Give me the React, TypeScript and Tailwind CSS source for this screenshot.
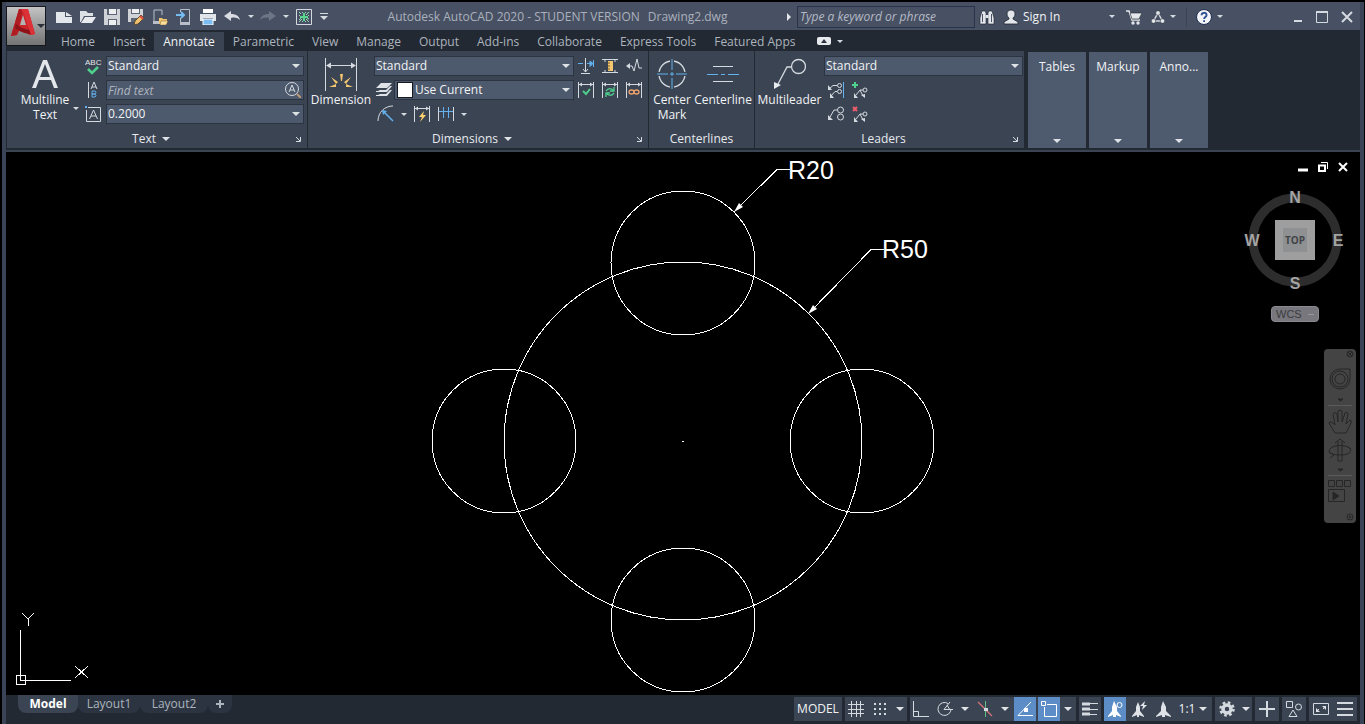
import type { ReactNode } from "react";

type IconProps = { w?: number; h?: number; children: ReactNode };

function Icon({ w = 16, h = 16, children }: IconProps) {
  return (
    <svg
      width={w}
      height={h}
      viewBox={`0 0 ${w} ${h}`}
      fill="none"
      stroke="#d5dae0"
      className="shrink-0"
      aria-hidden="true"
    >
      {children}
    </svg>
  );
}

function Caret({ small = false }: { small?: boolean }) {
  return small ? (
    <svg width="6" height="3" viewBox="0 0 6 3" className="shrink-0" aria-hidden="true">
      <path d="M0 0h6L3 3z" fill="#d5dae0" />
    </svg>
  ) : (
    <svg width="8" height="4" viewBox="0 0 8 4" className="shrink-0" aria-hidden="true">
      <path d="M0 0h8L4 4z" fill="#dfe3e8" />
    </svg>
  );
}

type IconButtonProps = { label: string; className?: string; children: ReactNode };

function IconButton({ label, className = "w-6", children }: IconButtonProps) {
  return (
    <button
      type="button"
      aria-label={label}
      className={`flex h-full shrink-0 items-center justify-center ${className}`}
    >
      {children}
    </button>
  );
}

/* ---------- Title bar ---------- */

function AppLogo() {
  return (
    <button
      type="button"
      aria-label="Application menu"
      className="absolute left-0 top-1 z-10 flex h-10 w-10 items-center justify-center border border-[#15181d] bg-linear-to-b from-[#c4c4c4] to-[#747474]"
    >
      <svg width="38" height="38" viewBox="0 0 38 38" aria-hidden="true">
        <path d="M12 2h9l7 25-6 1-2-6h-7l-3 6-6 1z" fill="#c9252b" />
        <path d="M16 8l3 10h-6z" fill="#b4b4b4" />
        <path d="M12 2h4L10 28l-6 1z" fill="#b01c22" />
        <path d="M9 17q8 7 16 5l2 5q-10 1-19-6z" fill="#8e1318" />
        <path d="M14 2h7l7 25-4 1-7-21z" fill="#dc3237" />
        <path d="M30 17h8l-4 4z" fill="#2a2f38" />
      </svg>
    </button>
  );
}

function QuickAccess() {
  return (
    <div className="flex h-full pl-[46px]">
      <IconButton label="New">
        <Icon>
          <path d="M0 3h9v5h7v6H0z" fill="#e3e6ea" stroke="none" />
          <path d="M10 3l6 4h-6z" fill="#e3e6ea" stroke="none" />
        </Icon>
      </IconButton>
      <IconButton label="Open">
        <Icon>
          <path d="M0 2h6l2 2h5v3H4L1 13H0z" fill="#dcdfe4" stroke="none" />
          <path d="M5 8h11l-4 6H1z" fill="#e8eaed" stroke="none" />
        </Icon>
      </IconButton>
      <IconButton label="Save">
        <Icon>
          <path d="M0 0h16v16H0z" fill="#cfd3d8" stroke="none" />
          <path d="M3 0h10v6H3zM4 10h9v6H4z" fill="#5d6573" stroke="none" />
          <path d="M5 0h7v5H5zM5 11h7v5H5z" fill="#eceef0" stroke="none" />
        </Icon>
      </IconButton>
      <IconButton label="Save As">
        <Icon>
          <path d="M0 0h15v8l-7 5H0z" fill="#cfd3d8" stroke="none" />
          <path d="M3 0h9v5H3zM3 9h6v4H3z" fill="#5d6573" stroke="none" />
          <path d="M4 0h7v4H4z" fill="#eceef0" stroke="none" />
          <path d="M6 16l1-4 6-6 3 3-6 6z" fill="#ecc06c" stroke="#5b4a33" />
          <path d="M12 7l3 3" stroke="#e04b43" strokeWidth="2" />
        </Icon>
      </IconButton>
      <IconButton label="Open from Web and Mobile">
        <Icon>
          <path d="M2 12V1h8v5" stroke="#b9bfc8" />
          <path d="M1 12h6v3H1z" fill="#b9bfc8" stroke="none" />
          <path d="M7 9h3l1 1h4v5H7z" fill="#f0c36d" stroke="none" />
          <path d="M9 12h7l-2 4H8z" fill="#ffdf9a" stroke="#77603a" strokeWidth=".5" />
        </Icon>
      </IconButton>
      <IconButton label="Save to Web and Mobile">
        <Icon>
          <path d="M4.500 3V.5h9V13M4.500 9v4" stroke="#b9bfc8" />
          <path d="M4 13h10v3H4z" fill="#b9bfc8" stroke="none" />
          <path d="M0 6h8M5 3l3 3-3 3" stroke="#74bdf3" strokeWidth="2" />
        </Icon>
      </IconButton>
      <IconButton label="Plot">
        <Icon>
          <path d="M3 0h10v4H3z" fill="#fff" stroke="none" />
          <path d="M0 5h16v7h-3V9H3v3H0z" fill="#e1e4e8" stroke="none" />
          <path d="M3 10h10v6H3z" fill="#7cbcf0" stroke="#fff" />
        </Icon>
      </IconButton>
      <IconButton label="Undo">
        <Icon>
          <path d="M0 7l7-5v3c5 0 8 2 9 6-2-2-5-3-9-2v3z" fill="#d9dde3" stroke="none" />
        </Icon>
      </IconButton>
      <IconButton label="Undo history" className="w-3.5">
        <Caret small />
      </IconButton>
      <IconButton label="Redo" className="w-5">
        <Icon>
          <path d="M16 7L9 2v3c-5 0-8 2-9 6 2-2 5-3 9-2v3z" fill="#6d7585" stroke="none" />
        </Icon>
      </IconButton>
      <IconButton label="Redo history" className="w-4">
        <Caret small />
      </IconButton>
      <IconButton label="Annotation monitor" className="w-5">
        <Icon>
          <path d="M.5.500h15v15H.5z" />
          <path
            d="M3 3l2 2M3 6l2 2M3 11l2-2M3 13l3-3M13 3l-3 3M13 6l-2 2M13 10l-2-1M13 13l-3-3M6 3l1 1M10 3L9 4M6 13l1-1M10 13l-1-1"
            stroke="#9ad9b8"
          />
          <path d="M8 4v8M4 8h8" stroke="#58d68d" strokeWidth="2" />
        </Icon>
      </IconButton>
      <IconButton label="Customize Quick Access Toolbar" className="w-5">
        <Icon w={8} h={7}>
          <path d="M0 .5h8" />
          <path d="M0 3h8L4 7z" fill="#d5dae0" stroke="none" />
        </Icon>
      </IconButton>
    </div>
  );
}

function TitleBar() {
  return (
    <div className="flex h-7 items-center bg-[#485063] pt-px">
      <QuickAccess />
      <h1 className="flex min-w-0 flex-1 justify-center gap-2 whitespace-nowrap text-[12px] text-[#aab1bd]">
        <span>Autodesk AutoCAD 2020 - STUDENT VERSION</span>
        <span>Drawing2.dwg</span>
      </h1>
      <span className="flex w-4 justify-center">
        <Icon w={4} h={8}>
          <path d="M0 0l4 4-4 4z" fill="#e3e6ea" stroke="none" />
        </Icon>
      </span>
      <input
        type="text"
        aria-label="Search"
        placeholder="Type a keyword or phrase"
        className="block h-[22px] w-[178px] border border-[#28324a] bg-[#485063] px-0.5 text-[12px] italic text-[#dfe3e8] placeholder:text-[#b4bac5]"
      />
      <IconButton label="Find">
        <Icon>
          <path
            d="M3 2h3l1 2v11H1V9zM13 2h-3L9 4v11h6V9z"
            fill="#e3e6ea"
            stroke="#1f2631"
            strokeWidth=".6"
          />
          <path d="M6.500 6h3v3h-3z" fill="#e3e6ea" stroke="none" />
          <path d="M3.500 5v8M12.500 5v8" stroke="#4a5365" />
        </Icon>
      </IconButton>
      <button type="button" className="flex h-full w-[118px] items-center text-[12px] text-[#f1f3f5]">
        <span className="flex w-6 justify-center">
          <Icon>
            <path
              d="M8 1c3 0 4 2 4 4s-1 3-2 4v1l5 3v2H1v-2l5-3V9C5 8 4 7 4 5s1-4 4-4z"
              fill="#e3e6ea"
              stroke="#1f2631"
              strokeWidth=".8"
            />
          </Icon>
        </span>
        <span>Sign In</span>
        <span className="ml-auto pr-0.5">
          <Caret small />
        </span>
      </button>
      <IconButton label="App Store" className="w-[34px]">
        <Icon>
          <path d="M0 2h3l3 9h8" strokeWidth="1.500" stroke="#e3e6ea" />
          <path d="M4 4h12l-3 6H6z" fill="#e3e6ea" stroke="#1f2631" strokeWidth=".6" />
          <circle cx="7" cy="14" r="1.700" fill="#e3e6ea" stroke="none" />
          <circle cx="12" cy="14" r="1.700" fill="#e3e6ea" stroke="none" />
        </Icon>
      </IconButton>
      <IconButton label="Autodesk 360" className="w-3.5">
        <Icon w={14} h={14}>
          <path d="M7 3l4.500 8h-9z" strokeWidth="1.500" />
          <circle cx="7" cy="3" r="2.300" fill="#e3e6ea" stroke="#1f2631" strokeWidth=".5" />
          <circle cx="2.500" cy="11" r="2.300" fill="#e3e6ea" stroke="#1f2631" strokeWidth=".5" />
          <circle cx="11.500" cy="11" r="2.300" fill="#e3e6ea" stroke="#1f2631" strokeWidth=".5" />
        </Icon>
      </IconButton>
      <IconButton label="Autodesk 360 options" className="w-4">
        <Caret small />
      </IconButton>
      <span className="mx-[5px] h-5 w-px bg-[#3c4454]" />
      <IconButton label="Help">
        <Icon>
          <circle cx="8" cy="8" r="7.500" fill="#f2f4f7" stroke="#1f2f50" />
          <path
            d="M5.500 6.200C5.500 3 10.600 3 10.600 6c0 2-2.500 2-2.500 4M8.100 11.200v1.800"
            stroke="#2c4f91"
            strokeWidth="1.800"
          />
        </Icon>
      </IconButton>
      <IconButton label="Help options" className="w-2">
        <Caret small />
      </IconButton>
      <div className="flex h-full items-center pl-[62px]">
        <IconButton label="Minimize">
          <Icon w={8} h={12}>
            <path d="M0 10h8" strokeWidth="2" />
          </Icon>
        </IconButton>
        <IconButton label="Maximize">
          <Icon w={12} h={12}>
            <path d="M.5 1h11v10.500H.5z" />
            <path d="M0 1h12" strokeWidth="2" />
          </Icon>
        </IconButton>
        <IconButton label="Close" className="w-[26px]">
          <Icon w={12} h={12}>
            <path d="M1 1l10 10M11 1L1 11" strokeWidth="2" />
          </Icon>
        </IconButton>
      </div>
    </div>
  );
}

/* ---------- Ribbon ---------- */

const ribbonTabs = [
  "Home",
  "Insert",
  "Annotate",
  "Parametric",
  "View",
  "Manage",
  "Output",
  "Add-ins",
  "Collaborate",
  "Express Tools",
  "Featured Apps",
];

function RibbonTabs() {
  return (
    <nav aria-label="Ribbon" className="flex h-[21px] items-end bg-[#222933] pl-[46px]">
      {ribbonTabs.map((tab) => (
        <button
          key={tab}
          type="button"
          className={`h-[19px] whitespace-nowrap px-[9px] text-[12px] leading-[18px] ${
            tab === "Annotate" ? "bg-[#3b4453] text-[#f1f3f5]" : "text-[#adb4be]"
          }`}
        >
          {tab}
        </button>
      ))}
      <button type="button" aria-label="Minimize ribbon" className="ml-3 flex h-5 items-center gap-1.5">
        <Icon w={14} h={8}>
          <rect width="14" height="8" rx="2" fill="#e8ebee" stroke="none" />
          <path d="M4 6l3-4 3 4z" fill="#2b3340" stroke="none" />
        </Icon>
        <Caret small />
      </button>
    </nav>
  );
}

type ComboProps = { label: string; value: string; swatch?: boolean; className?: string };

function Combo({ label, value, swatch = false, className = "w-full" }: ComboProps) {
  return (
    <div className={`relative h-5 border border-[#2c3442] bg-[#4d596c] ${className}`}>
      <select
        aria-label={label}
        defaultValue={value}
        className={`block h-full w-full appearance-none pr-4 text-[12px] leading-[18px] text-[#f1f3f5] ${
          swatch ? "pl-5" : "pl-px"
        }`}
      >
        <option>{value}</option>
      </select>
      {swatch && <span className="absolute left-0.5 top-px size-4 border border-[#15181d] bg-white" />}
      <span className="pointer-events-none absolute inset-y-0 right-[3px] flex items-center">
        <Caret />
      </span>
    </div>
  );
}

type PanelProps = { title: string; caret?: boolean; launcher?: boolean; className: string; children: ReactNode };

function Panel({ title, caret = false, launcher = false, className, children }: PanelProps) {
  return (
    <section aria-label={title} className={`flex shrink-0 flex-col border-r border-[#222933] bg-[#3b4453] ${className}`}>
      <div className="flex flex-1 items-start pt-[5px]">{children}</div>
      <div
        className={`relative flex h-[18px] items-center justify-center gap-1.5 text-[12px] text-[#e6e9ed] ${
          launcher ? "pr-3" : ""
        }`}
      >
        <span>{title}</span>
        {caret && <Caret />}
        {launcher && (
          <button type="button" aria-label={`${title} settings`} className="absolute right-1.5 top-[7px]">
            <Icon w={5} h={5}>
              <path d="M0 0l4 4M4.500 0v4.500H0" />
            </Icon>
          </button>
        )}
      </div>
    </section>
  );
}

function BigButton({ label, className, children }: IconButtonProps) {
  return (
    <button
      type="button"
      className={`flex shrink-0 flex-col items-center text-[12px] leading-[15px] text-[#f1f3f5] ${className}`}
    >
      <span className="flex h-9 w-full items-center justify-center">{children}</span>
      <span className="text-center">{label}</span>
    </button>
  );
}

function TextPanel() {
  return (
    <Panel title="Text" caret launcher className="w-[301px]">
      <div className="relative w-[76px]">
        <BigButton label="Multiline Text" className="mx-auto w-16">
          <Icon w={26} h={28}>
            <path d="M0 28L11 0h4l11 28h-4l-3-8H7l-3 8zM8 17h10L13 4z" fill="#e3e6ea" stroke="none" />
          </Icon>
        </BigButton>
        <span className="absolute right-1 top-[51px] flex">
          <Caret small />
        </span>
      </div>
      <div className="grid w-[23px] auto-rows-[20px] gap-y-1">
        <IconButton label="Check spelling" className="w-5">
          <Icon w={18} h={18}>
            <text x="1" y="8" fontSize="8" fontFamily="Liberation Sans" stroke="none" fill="#e3e6ea">
              ABC
            </text>
            <path d="M4 12l4 4 6-6" stroke="#4fd08c" strokeWidth="2.500" />
          </Icon>
        </IconButton>
        <IconButton label="Text alignment" className="w-5">
          <Icon>
            <path d="M3.500 0v16" />
            <path d="M6 7l3-7 3 7M7 5h4" />
            <path d="M7 9v6h3q2-1 0-3H7h3q2-2 0-3z" stroke="#63b1ee" />
          </Icon>
        </IconButton>
        <IconButton label="Annotative text" className="w-5">
          <Icon>
            <path d="M3 1.500h12.500v14H1.500V4" />
            <path d="M4.500 13l4-9 4 9M6 10h5" />
            <path d="M0 1h2" stroke="#63b1ee" strokeWidth="2" />
          </Icon>
        </IconButton>
      </div>
      <div className="flex w-[198px] flex-col gap-1">
        <Combo label="Text style" value="Standard" />
        <div className="relative h-5 border border-[#2c3442] bg-[#4d596c]">
          <input
            type="text"
            aria-label="Find text"
            placeholder="Find text"
            className="block h-full w-full px-px text-[12px] italic text-[#f1f3f5] placeholder:text-[#aeb5c0]"
          />
          <button type="button" aria-label="Find" className="absolute right-0.5 top-px">
            <Icon>
              <circle cx="7" cy="7" r="6.500" />
              <path d="M4 10l3-7 3 7M5 8h4" />
              <path d="M12 12l4 4" stroke="#b99a77" strokeWidth="2" />
            </Icon>
          </button>
        </div>
        <Combo label="Text height" value="0.2000" />
      </div>
    </Panel>
  );
}

function DimensionsPanel() {
  return (
    <Panel title="Dimensions" caret launcher className="w-[341px]">
      <BigButton label="Dimension" className="w-[66px]">
        <Icon w={32} h={33}>
          <path d="M.5 0v33M31.500 0v33M2 7.500h28" />
          <path d="M1 7.500l5-3v6zM31 7.500l-5-3v6z" fill="#d5dae0" stroke="none" />
          <path
            d="M15 16h3l-1 7h-1zM6 19l7 5-2 2zM26 19l-7 5 2 2zM4 29l7-3v3zM28 29l-7-3v3z"
            fill="#f3c66f"
            stroke="none"
          />
        </Icon>
      </BigButton>
      <div className="flex w-[200px] flex-col gap-1">
        <Combo label="Dimension style" value="Standard" />
        <div className="flex">
          <span className="flex w-5 items-center justify-center">
            <Icon>
              <path
                d="M5 1h11l-5 5H0zM0 9h2l2-1h6l4-4h2l-5 6H0zM0 13h2l2-1h6l4-4h2l-5 6H0z"
                fill="#dfe3e8"
                stroke="none"
              />
            </Icon>
          </span>
          <Combo label="Dimension layer" value="Use Current" swatch className="flex-1" />
        </div>
        <div className="flex h-5">
          <IconButton label="Radius">
            <Icon w={18} h={18}>
              <path d="M1 16C1 7 8 1 16 1" />
              <path d="M6 6l10 10" stroke="#63b1ee" strokeWidth="1.500" />
              <path d="M5 5l5 1-4 4z" fill="#63b1ee" stroke="none" />
            </Icon>
          </IconButton>
          <IconButton label="Dimension types" className="w-3">
            <Caret small />
          </IconButton>
          <IconButton label="Quick dimension">
            <Icon>
              <path d="M.5 0v16M15.500 0v16M1 2.500h14" />
              <path d="M1 2.500l3-2v4zM15 2.500l-3-2v4z" fill="#d5dae0" stroke="none" />
              <path d="M10 5l-5 6h3l-2 5 6-7H9z" fill="#ffd36c" stroke="none" />
            </Icon>
          </IconButton>
          <IconButton label="Continue">
            <Icon>
              <path d="M.5 1v14M15.500 1v14" />
              <path d="M5.500 1v11M10.500 1v11M1 5.500h14" stroke="#63b1ee" />
            </Icon>
          </IconButton>
          <IconButton label="Continue options" className="w-3">
            <Caret small />
          </IconButton>
        </div>
      </div>
      <div className="grid auto-rows-[20px] grid-cols-3 gap-y-1">
        <IconButton label="Break">
          <Icon>
            <path d="M7.500 0v14M5 11l2.500 3 2.500-3M3 15.500h9" />
            <path d="M0 5.500h5M9 5.500h4" stroke="#63b1ee" />
            <path d="M12 3l3 2.500-3 3zM15.500 2v7" fill="#63b1ee" stroke="#63b1ee" />
          </Icon>
        </IconButton>
        <IconButton label="Adjust space">
          <Icon>
            <path d="M0 1.500h16M0 14.500h16M3 2v2M13 2v2M3 12v2M13 12v2" />
            <path d="M6 3h5v10H6z" fill="#f3c66f" stroke="none" />
            <path d="M6 5h2M6 8h2M6 11h2" stroke="#795b27" />
          </Icon>
        </IconButton>
        <IconButton label="Dimension jog line">
          <Icon>
            <path d="M2 8h4l2 5 3-12 2 9h3" />
            <path d="M0 8l4-3v6z" fill="#d5dae0" stroke="none" />
          </Icon>
        </IconButton>
        <IconButton label="Inspect">
          <Icon>
            <path d="M.5 0v16M15.500 0v16M1 2.500h14" />
            <path d="M1 2.500l3-2v4zM15 2.500l-3-2v4z" fill="#d5dae0" stroke="none" />
            <path d="M5 9l3 3 4-5" stroke="#4fd08c" strokeWidth="2" />
          </Icon>
        </IconButton>
        <IconButton label="Update">
          <Icon>
            <path d="M.5 0v16M15.500 0v16M1 2.500h14" />
            <path d="M1 2.500l3-2v4zM15 2.500l-3-2v4z" fill="#d5dae0" stroke="none" />
            <path
              d="M4 9q3-4 7-1M12 5v4H8M12 11q-3 4-7 1M4 15v-4h4"
              stroke="#4fd08c"
              strokeWidth="1.300"
            />
          </Icon>
        </IconButton>
        <IconButton label="Reassociate">
          <Icon>
            <path d="M.5 0v16M15.500 0v16M1 2.500h14" />
            <path d="M1 2.500l3-2v4zM15 2.500l-3-2v4z" fill="#d5dae0" stroke="none" />
            <ellipse cx="5.500" cy="10" rx="2.500" ry="2" stroke="#f0a26b" strokeWidth="1.300" />
            <ellipse cx="10.500" cy="10" rx="2.500" ry="2" stroke="#f0a26b" strokeWidth="1.300" />
          </Icon>
        </IconButton>
      </div>
    </Panel>
  );
}

function CenterlinesPanel() {
  return (
    <Panel title="Centerlines" className="w-[106px]">
      <BigButton label="Center Mark" className="w-[46px]">
        <Icon w={32} h={32}>
          <circle cx="16" cy="16" r="13" strokeWidth="1.300" />
          <path d="M16 0v11M16 21v11M0 16h11M21 16h11" stroke="#3b4453" strokeWidth="4" />
          <path d="M16 1v11M16 20v11M1 16h11M20 16h11M16 14v4M14 16h4" stroke="#63b1ee" />
        </Icon>
      </BigButton>
      <BigButton label="Centerline" className="w-14">
        <Icon w={32} h={16}>
          <path d="M6 .5h20M6 15.500h20" />
          <path d="M0 8.500h11M14 8.500h4M21 8.500h11" stroke="#63b1ee" />
        </Icon>
      </BigButton>
    </Panel>
  );
}

function LeadersPanel() {
  return (
    <Panel title="Leaders" launcher className="w-[270px]">
      <BigButton label="Multileader" className="w-[69px]">
        <Icon w={32} h={32}>
          <circle cx="24.500" cy="8.500" r="7" strokeWidth="1.300" />
          <path d="M17 9h-4L4 26" strokeWidth="1.300" />
          <path d="M0 31V24l7 3z" fill="#e8ebee" stroke="none" />
        </Icon>
      </BigButton>
      <div className="flex w-[199px] flex-col gap-1">
        <Combo label="Multileader style" value="Standard" />
        <div className="grid w-12 auto-rows-[20px] grid-cols-2 gap-y-1">
          <IconButton label="Align leaders">
            <Icon>
              <circle cx="11.500" cy="3.500" r="2" />
              <circle cx="11.500" cy="9.500" r="2" />
              <path d="M9 3.500H5L1 7M9 9.500H7L3 14" />
              <path d="M0 3v5h4zM2 11v5h4z" fill="#d5dae0" stroke="none" />
              <path d="M15.500 0v16" stroke="#63b1ee" />
            </Icon>
          </IconButton>
          <IconButton label="Add leader">
            <Icon>
              <circle cx="13" cy="8" r="2" />
              <path d="M11 8H8L4 13M8 8l3 6" />
              <path d="M2 11v5h4zM9 13l4 3v-4z" fill="#d5dae0" stroke="none" />
              <path d="M3 0v6M0 3h6" stroke="#4fd08c" strokeWidth="2" />
            </Icon>
          </IconButton>
          <IconButton label="Collect leaders">
            <Icon>
              <circle cx="12.500" cy="4" r="3" />
              <circle cx="12.500" cy="11" r="3" />
              <path d="M9 4H6L2 11" />
              <path d="M0 9v5h5z" fill="#d5dae0" stroke="none" />
            </Icon>
          </IconButton>
          <IconButton label="Remove leader">
            <Icon>
              <circle cx="13" cy="8" r="2" />
              <path d="M11 8H8L4 13M8 8l3 6" />
              <path d="M2 11v5h4zM9 13l4 3v-4z" fill="#d5dae0" stroke="none" />
              <path d="M1 1l4 4M5 1L1 5" stroke="#ee5d6c" strokeWidth="2" />
            </Icon>
          </IconButton>
        </div>
      </div>
    </Panel>
  );
}

function Ribbon() {
  return (
    <div className="flex h-[101px] gap-[3px] border-b-2 border-[#3b4453] bg-[#222933] pb-0.5 pl-px">
      <div className="flex">
        <TextPanel />
        <DimensionsPanel />
        <CenterlinesPanel />
        <LeadersPanel />
      </div>
      {["Tables", "Markup", "Anno..."].map((name) => (
        <button
          key={name}
          type="button"
          className="mt-px flex h-24 w-[58px] flex-col items-center justify-between bg-[#4e5a6d] pb-[5px] pt-1.5 text-[12px] leading-[18px] text-[#f1f3f5]"
        >
          {name}
          <Caret />
        </button>
      ))}
    </div>
  );
}

/* ---------- Drawing area ---------- */

const circles = [
  { cx: 677, cy: 289, r: 179 },
  { cx: 677, cy: 111, r: 72 },
  { cx: 498, cy: 289, r: 72 },
  { cx: 856, cy: 289, r: 72 },
  { cx: 677, cy: 468, r: 72 },
];

function Drawing() {
  return (
    <svg
      viewBox="0 0 1354 543"
      className="absolute inset-0 h-full w-full"
      fill="none"
      stroke="#fff"
      role="img"
      aria-label="Drawing2.dwg"
    >
      <g shapeRendering="crispEdges">
        {circles.map((c) => (
          <circle key={`${c.cx}-${c.cy}-${c.r}`} {...c} />
        ))}
        <path d="M676 289.500h2" />
        <path d="M728 60L771 17.500H784M802 162L865 97.500H878" />
      </g>
      <path d="M728 60l5-9 4 4zM802 162l5-9 4 4z" fill="#fff" stroke="none" />
      <g fill="#fff" stroke="none" fontSize="25" fontFamily="Liberation Sans, Arial, sans-serif">
        <text x="782" y="27">
          R20
        </text>
        <text x="876" y="106">
          R50
        </text>
      </g>
    </svg>
  );
}

function UcsIcon() {
  return (
    <svg
      width="76"
      height="90"
      viewBox="0 0 76 90"
      className="absolute bottom-0 left-2"
      fill="none"
      stroke="#fff"
      role="img"
      aria-label="UCS icon"
    >
      <g shapeRendering="crispEdges">
        <path d="M6.500 25v51M6 75.500h51M2.500 70.500h9v9h-9z" />
        <path d="M8 8l6 6 6-6M14.500 14v7" />
        <path d="M61 61l13 12M74 61L61 73" />
      </g>
    </svg>
  );
}

function ViewCube() {
  return (
    <div className="flex flex-col items-center gap-3.5">
      <svg width="104" height="104" viewBox="0 0 104 104" role="img" aria-label="ViewCube">
        <circle cx="52" cy="52" r="42" fill="none" stroke="#2d2d2d" strokeWidth="9" />
        <path d="M32 32h40v40H32z" fill="#9e9e9e" />
        <path d="M40 40h24v24H40z" fill="#8e9092" />
        <g
          fill="#a3a3a3"
          fontSize="16"
          fontWeight="bold"
          fontFamily="Liberation Sans, Arial, sans-serif"
          textAnchor="middle"
        >
          <text x="52" y="15">
            N
          </text>
          <text x="52" y="101">
            S
          </text>
          <text x="9" y="58">
            W
          </text>
          <text x="95" y="58">
            E
          </text>
          <text x="52" y="56" fontSize="10" fill="#424448" fontFamily="Open Sans, sans-serif">
            TOP
          </text>
        </g>
      </svg>
      <button
        type="button"
        className="flex h-4 w-12 items-center justify-between rounded-sm border border-[#8a8a92] bg-[#77777d] px-1 font-['Liberation_Sans',sans-serif] text-[11px] leading-none text-[#3c3c40]"
      >
        WCS
        <span className="h-px w-1.5 bg-[#96969c]" />
      </button>
    </div>
  );
}

function NavigationBar() {
  return (
    <div className="h-[174px] w-8 rounded-sm bg-[#444]">
      <svg
        width="32"
        height="174"
        viewBox="0 0 32 174"
        fill="none"
        stroke="#262626"
        role="img"
        aria-label="Navigation bar"
      >
        <circle cx="26" cy="5" r="3" />
        <path d="M24 3l4 4M28 3l-4 4" />
        <path d="M16 20h10v10a10 10 0 1 1-10-10z" />
        <circle cx="16" cy="30" r="8" />
        <circle cx="16" cy="30" r="5" />
        <path d="M14 50h5l-2.500 2zM14 120h5l-2.500 2z" fill="#262626" />
        <path d="M4 56.500h24M4 126.500h24" stroke="#5b5b5b" />
        <path d="M11 84l-6-10q1-3 6 2l-2-11q2-3 4 0l1 8 0-11q2-2 4 0v11l3-9q2-2 3 1l-2 10 4-4q2 0 1 3l-5 10z" />
        <path d="M14 92v20h4V92M11 94l5-4 5 4M24 98c5 3 3 8-8 8S3 102 7 99s14-4 20 1M5 103l5 3-4 3" />
        <path d="M4.500 131.500h6v6h-6zM12.500 131.500h6v6h-6zM20.500 131.500h6v6h-6zM4.500 140.500h16v12h-16z" />
        <path d="M9 143l6 4-6 4z" fill="#262626" />
        <circle cx="26" cy="168" r="3" />
        <circle cx="26" cy="168" r="1" />
      </svg>
    </div>
  );
}

function Canvas() {
  return (
    <main className="relative min-h-0 flex-1 overflow-hidden bg-black">
      <Drawing />
      <UcsIcon />
      <div className="absolute right-[7px] top-[7px] flex h-4">
        <IconButton label="Minimize drawing" className="w-5">
          <Icon w={10} h={10}>
            <path d="M0 8h10" stroke="#fff" strokeWidth="3" />
          </Icon>
        </IconButton>
        <IconButton label="Restore drawing" className="w-5">
          <Icon w={10} h={10}>
            <path d="M1 3.500h6V9H1z" stroke="#fff" strokeWidth="2" />
            <path d="M3 .5h6.500V7" stroke="#fff" />
          </Icon>
        </IconButton>
        <IconButton label="Close drawing" className="w-5">
          <Icon w={10} h={10}>
            <path d="M1 1l8 8M9 1L1 9" stroke="#fff" strokeWidth="2" />
          </Icon>
        </IconButton>
      </div>
      <div className="absolute right-[13px] top-9">
        <ViewCube />
      </div>
      <div className="absolute right-1 top-[197px]">
        <NavigationBar />
      </div>
    </main>
  );
}

/* ---------- Status bar ---------- */

function LayoutTabs() {
  return (
    <div className="flex h-[18px] pl-3 text-[12px] leading-[18px]">
      <button type="button" className="w-[60px] rounded-b-lg bg-[#3b4453] font-bold text-white">
        Model
      </button>
      <button type="button" className="w-[62px] rounded-b-lg bg-[#2c3441] text-[#adb4be]">
        Layout1
      </button>
      <button type="button" className="w-[68px] rounded-b-lg bg-[#2c3441] text-[#adb4be]">
        Layout2
      </button>
      <button
        type="button"
        aria-label="New layout"
        className="flex w-6 items-center justify-center rounded-b-lg bg-[#2c3441]"
      >
        <Icon w={8} h={8}>
          <path d="M4 0v8M0 4h8" strokeWidth="2" stroke="#adb4be" />
        </Icon>
      </button>
    </div>
  );
}

function StatusGroup({ children }: { children: ReactNode }) {
  return <div className="flex h-6 items-center bg-[#3b4453]">{children}</div>;
}

function StatusBar() {
  return (
    <footer className="flex h-[29px] shrink-0 bg-[#222933]">
      <LayoutTabs />
      <div className="ml-auto flex gap-[3px] pr-[3px] pt-0.5 text-[12px] text-[#f1f3f5]">
        <StatusGroup>
          <button type="button" className="h-full w-12 text-center">
            MODEL
          </button>
        </StatusGroup>
        <StatusGroup>
          <IconButton label="Grid" className="w-[22px]">
            <Icon>
              <path d="M3.500 0v16M8.500 0v16M12.500 0v16M0 3.500h16M0 8.500h16M0 12.500h16" />
            </Icon>
          </IconButton>
          <IconButton label="Snap mode" className="w-[26px]">
            <Icon w={14} h={14}>
              <path d="M1 2h12M1 7h12M1 12h12" strokeWidth="2" strokeDasharray="2 3" />
            </Icon>
          </IconButton>
          <IconButton label="Snap options" className="w-3.5">
            <Caret />
          </IconButton>
        </StatusGroup>
        <StatusGroup>
          <IconButton label="Ortho mode" className="w-[22px]">
            <Icon>
              <path d="M.5 0v15.500H16M.5 10.500h5v5" />
            </Icon>
          </IconButton>
          <IconButton label="Polar tracking" className="w-[26px]">
            <Icon>
              <path d="M11 2.500a6.500 6.500 0 1 0 3 5.500M7 8.500h9M7 8.500L13 1" />
              <path d="M10 4l3 5" />
            </Icon>
          </IconButton>
          <IconButton label="Polar options" className="w-3.5">
            <Caret />
          </IconButton>
          <IconButton label="Isometric drafting" className="w-[26px]">
            <Icon>
              <path d="M1 1l14 14" stroke="#d9717a" strokeWidth="1.300" />
              <path d="M8.500 0v16" stroke="#62bd83" />
              <path d="M7 8.500h4" strokeWidth="3" />
            </Icon>
          </IconButton>
          <IconButton label="Isometric options" className="w-3.5">
            <Caret />
          </IconButton>
          <div className="flex h-full gap-0.5 pl-0.5">
            <IconButton label="Object snap tracking" className="w-[22px] bg-[#5c8dc7]">
              <Icon>
                <path d="M14 1L1 14.500h15" stroke="#fff" />
                <path d="M7 7h4v4H7z" fill="#fff" stroke="none" />
              </Icon>
            </IconButton>
            <IconButton label="Object snap" className="w-[22px] bg-[#5c8dc7]">
              <Icon>
                <path d="M6 3.500h9.500v12h-12V6M.5.500h4v4h-4z" stroke="#fff" />
              </Icon>
            </IconButton>
          </div>
          <IconButton label="Object snap options" className="w-4">
            <Caret />
          </IconButton>
        </StatusGroup>
        <StatusGroup>
          <IconButton label="Lineweight" className="w-[22px]">
            <Icon>
              <path d="M0 3h8M0 8h8M0 13h8" strokeWidth="3" />
              <path d="M8 2.500h8M8 8.500h8M8 13.500h7" />
            </Icon>
          </IconButton>
        </StatusGroup>
        <StatusGroup>
          <IconButton label="Annotation visibility" className="w-[22px] bg-[#5c8dc7]">
            <Icon>
              <path d="M7 0l3 6v4l4 5v1l-5-2v2H6v-2l-5 2v-1l4-5V6z" fill="#fff" stroke="none" />
              <circle cx="12.500" cy="4" r="2.500" stroke="#fff" />
            </Icon>
          </IconButton>
          <IconButton label="Auto scale" className="w-[26px]">
            <Icon>
              <path d="M7 1l2 5v4l4 5v1l-5-2v2H6v-2l-5 2v-1l4-5V6z" fill="#dfe3e8" stroke="none" />
              <path d="M14 0l-5 5h3l-1 4 5-5h-3z" fill="#dfe3e8" stroke="none" />
            </Icon>
          </IconButton>
          <IconButton label="Annotation scale" className="w-[22px]">
            <Icon>
              <path d="M8 0l3 6v4l5 5v1l-6-2v2H7v-2l-6 2v-1l5-5V6z" fill="#dfe3e8" stroke="none" />
            </Icon>
          </IconButton>
          <button type="button" className="flex h-full w-[38px] items-center justify-center gap-1">
            1:1
            <Caret />
          </button>
        </StatusGroup>
        <StatusGroup>
          <IconButton label="Workspace switching">
            <Icon>
              <circle cx="8" cy="8" r="4" strokeWidth="3.500" />
              <circle cx="8" cy="8" r="6.500" strokeWidth="2.500" strokeDasharray="2.600 2.500" />
            </Icon>
          </IconButton>
          <IconButton label="Workspace options" className="w-[13px]">
            <Caret />
          </IconButton>
        </StatusGroup>
        <StatusGroup>
          <IconButton label="Annotation monitor">
            <Icon>
              <path d="M8 0v16M0 8h16" strokeWidth="2" />
            </Icon>
          </IconButton>
        </StatusGroup>
        <StatusGroup>
          <IconButton label="Isolate objects">
            <Icon>
              <path d="M.5.500h6v6h-6zM7 9l4 6.500H3z" />
              <circle cx="12.500" cy="6" r="3" />
            </Icon>
          </IconButton>
        </StatusGroup>
        <StatusGroup>
          <IconButton label="Clean screen">
            <Icon>
              <path d="M.5 2.500h15v11H.5z" />
              <path d="M9 5h4v4zM3 7v4h4z" fill="#dfe3e8" stroke="none" />
              <path d="M12 6l-2 2M4 10l2-2" />
            </Icon>
          </IconButton>
          <IconButton label="Customization">
            <Icon>
              <path d="M0 2h16M0 8h16M0 14h16" strokeWidth="2" />
            </Icon>
          </IconButton>
        </StatusGroup>
      </div>
    </footer>
  );
}

export default function App() {
  return (
    <div className="h-screen min-w-[1240px] border-l-2 border-r border-t-2 border-black bg-black font-['Open_Sans','Noto_Sans',sans-serif]">
      <div className="relative flex h-full flex-col border-x-4 border-[#3b4356]">
        <header className="relative shrink-0">
          <AppLogo />
          <TitleBar />
          <RibbonTabs />
          <Ribbon />
        </header>
        <Canvas />
        <StatusBar />
      </div>
    </div>
  );
}
